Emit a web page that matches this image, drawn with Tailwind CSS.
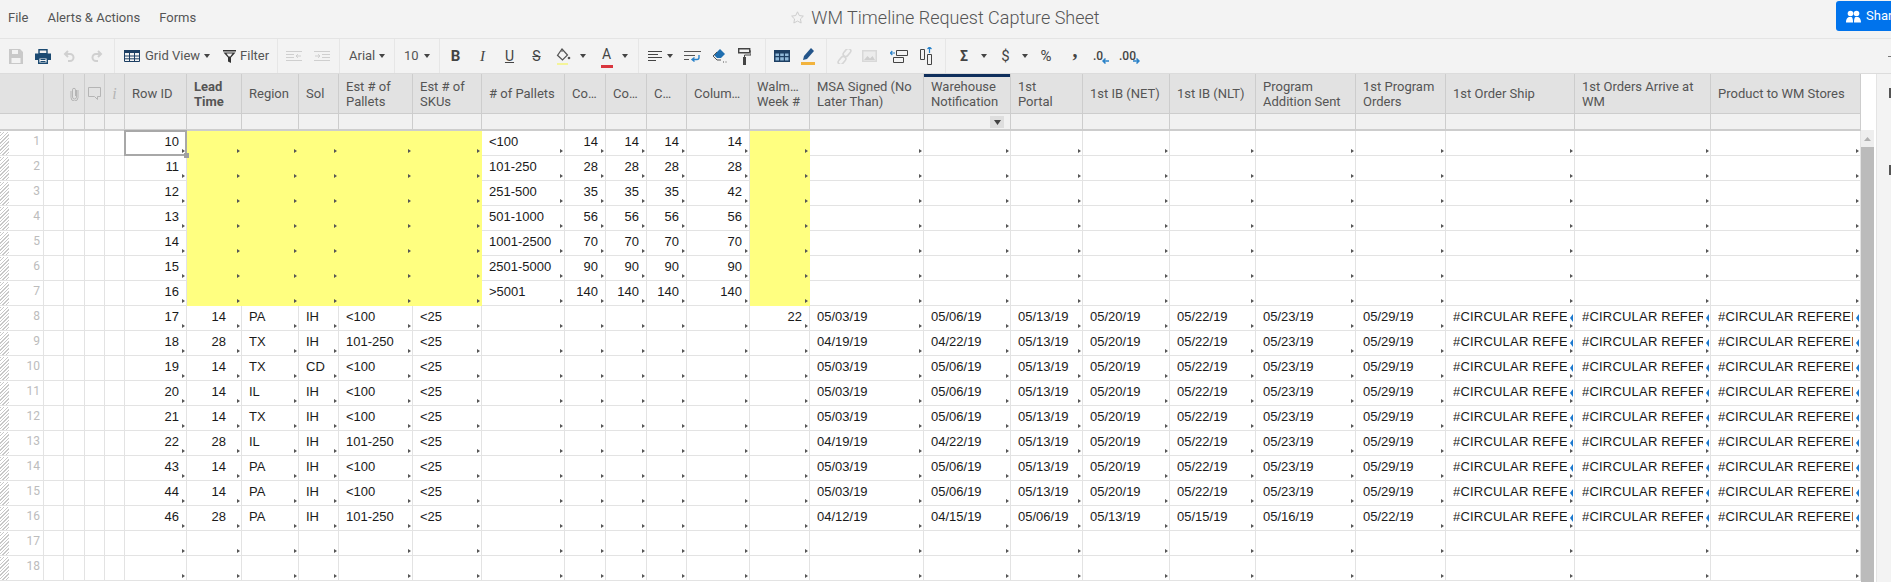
<!DOCTYPE html>
<html lang="en">
<head>
<meta charset="utf-8">
<title>WM Timeline Request Capture Sheet</title>
<script src="https://cdn.jsdelivr.net/npm/@tailwindcss/browser@4"></script>
</head>
<body class="w-[1891px] h-[582px] overflow-hidden bg-[#f3f3f3] flex flex-col font-['Roboto',sans-serif] text-[13px] text-[#555]">

<header class="h-[39px] shrink-0 grid grid-cols-[1fr_auto_1fr] border-b border-[#e4e4e4]">
  <nav class="flex items-center gap-[19px] pl-[8px] pb-[3px]"><span>File</span><span>Alerts &amp; Actions</span><span>Forms</span></nav>
  <div class="flex items-center gap-[7px] pb-[3px]">
    <svg class="w-[13px] h-[13px]" viewBox="0 0 16 16"><path d="M8 1l2.2 4.6 5 .7-3.6 3.5.9 5L8 12.4l-4.5 2.4.9-5L.8 6.300l5-.7z" fill="none" stroke="#ccc" stroke-width="1.200"/></svg>
    <h1 class="text-[18px] font-light text-[#555]">WM Timeline Request Capture Sheet</h1>
  </div>
  <div class="flex justify-end">
    <button class="mt-[1px] h-[30px] w-[80px] mr-[-25px] shrink-0 rounded-[3px] bg-[#0073ec] text-white flex items-center pl-[10px] gap-[5px] text-[13px]">
      <svg class="w-[15px] h-[13px]" viewBox="0 0 15 13" fill="#fff"><circle cx="4.500" cy="3.500" r="2.800"/><circle cx="10.500" cy="3.500" r="2.800"/><path d="M0 12.500c0-4 2-5.500 3.500-5.500h2c1 .5 1.500 2 1.500 5.500zM8 12.500c0-3.500.5-5 1.500-5.500h2C13 7 15 8.500 15 12.500z"/></svg>
      <span>Share</span>
    </button>
  </div>
</header>

<div class="h-[35px] shrink-0 flex border-b border-[#dcdcdc] text-[#555] [&>div]:flex [&>div]:items-center [&>div]:h-full [&>div]:border-r [&>div]:border-[#e6e6e6]">
  <div class="w-[115px] pl-[2px]">
    <span class="w-[27px] flex justify-center"><svg class="w-[14px] h-[15px]" viewBox="0 0 14 15"><path d="M0 0h11l3 3v12H0z" fill="#c9c9c9"/><path d="M3 1h6v4H3zM2.500 9h9v5h-9z" fill="#f3f3f3"/></svg></span>
    <span class="w-[27px] flex justify-center"><svg class="w-[16px] h-[15px]" viewBox="0 0 16 15"><path d="M4 .7h8v4H4z" fill="none" stroke="#1b4a72" stroke-width="1.400"/><path d="M0 4.500h16V11h-3V8H3v3H0z" fill="#1b4a72"/><path d="M3.700 8.700h8.600v5.600H3.700z" fill="none" stroke="#1b4a72" stroke-width="1.400"/><path d="M5.500 10.500h5M5.500 12.500h5" stroke="#1b4a72"/></svg></span>
    <span class="w-[27px] flex justify-center"><svg class="w-[13px] h-[13px]" viewBox="0 0 13 13" fill="none" stroke="#d0d0d0" stroke-width="2"><path d="M5 1L2 4l3 3"/><path d="M2 4h5a3.500 3.500 0 0 1 3.500 3.500v0A3.500 3.500 0 0 1 7 11H5"/></svg></span>
    <span class="w-[27px] flex justify-center"><svg class="w-[13px] h-[13px]" viewBox="0 0 13 13" fill="none" stroke="#d0d0d0" stroke-width="2"><path d="M8 1l3 3-3 3"/><path d="M11 4H6a3.500 3.500 0 0 0-3.500 3.500v0A3.500 3.500 0 0 0 6 11h2"/></svg></span>
  </div>
  <div class="w-[163px] pl-[9px]">
    <svg class="w-[16px] h-[12px]" viewBox="0 0 16 12"><path d="M0 0h16v3H0z" fill="#1d3f63"/><path d="M.5.500h15v11H.5zM.5 6h15M.5 8.800h15M5.500 3v9M10.500 3v9" fill="none" stroke="#1d3f63"/></svg>
    <span class="ml-[5px]">Grid View</span>
    <svg class="ml-[4px] w-[6px] h-[4px]" viewBox="0 0 6 4"><path d="M0 0h6L3 4z" fill="#444"/></svg>
    <svg class="ml-[13px] w-[13px] h-[13px]" viewBox="0 0 13 13"><path d="M0 0h13v1.500H0z" fill="#333"/><path d="M.5 2.500h12L8 7.500V13L5 11.500v-4z" fill="#333"/><path d="M3.500 3.500h6L7.300 6.500h-1.600z" fill="#f3f3f3"/></svg>
    <span class="ml-[4px]">Filter</span>
  </div>
  <div class="w-[62px] pl-[2px]">
    <span class="w-[28px] flex justify-center"><svg class="w-[16px] h-[11px]" viewBox="0 0 16 11" stroke="#cfcfcf" fill="none"><path d="M0 .500h16M0 3.500h8M0 6.500h8M0 9.500h16"/><path d="M15 5h-5M12 3.200L10 5l2 1.800"/></svg></span>
    <span class="w-[28px] flex justify-center"><svg class="w-[16px] h-[11px]" viewBox="0 0 16 11" stroke="#cfcfcf" fill="none"><path d="M0 .500h16M8 3.500h8M8 6.500h8M0 9.500h16"/><path d="M1 5h5M4 3.200L6 5 4 6.800"/></svg></span>
  </div>
  <div class="w-[55px] pl-[9px]">
    <span>Arial</span>
    <svg class="ml-[4px] w-[6px] h-[4px]" viewBox="0 0 6 4"><path d="M0 0h6L3 4z" fill="#444"/></svg>
  </div>
  <div class="w-[45px] pl-[9px]">
    <span>10</span>
    <svg class="ml-[5px] w-[6px] h-[4px]" viewBox="0 0 6 4"><path d="M0 0h6L3 4z" fill="#444"/></svg>
  </div>
  <div class="w-[199px] pl-[2px] text-[#444] [&>span]:w-[27px] [&>span]:flex [&>span]:justify-center">
    <span class="text-[15px] font-bold">B</span>
    <span class="text-[15px] italic font-['Liberation_Serif',serif]">I</span>
    <span class="text-[14px] underline">U</span>
    <span class="text-[14px] line-through">S</span>
    <span><svg class="w-[15px] h-[17px]" viewBox="0 0 15 17"><path d="M6 1l5.500 6L6.500 12 1.500 7.300z" fill="none" stroke="#555" stroke-width="1.200"/><path d="M6 1v3" stroke="#555"/><circle cx="13" cy="10" r="1.300" fill="#555"/><path d="M1 15h11v2H1z" fill="#f4f49a"/></svg></span>
    <svg class="ml-[3px] w-[6px] h-[4px]" viewBox="0 0 6 4"><path d="M0 0h6L3 4z" fill="#444"/></svg>
    <span class="ml-[7px] relative text-[14px] pb-[3px]">A<i class="absolute left-[8px] bottom-0 w-[12px] h-[3px] bg-[#d9363e]"></i></span>
    <svg class="ml-[2px] w-[6px] h-[4px]" viewBox="0 0 6 4"><path d="M0 0h6L3 4z" fill="#444"/></svg>
  </div>
  <div class="w-[127px] pl-[9px]">
    <svg class="w-[14px] h-[12px]" viewBox="0 0 14 12" stroke="#444"><path d="M0 1.500h14M0 4.500h10M0 7.500h14M0 10.500h8"/></svg>
    <svg class="ml-[5px] w-[6px] h-[4px]" viewBox="0 0 6 4"><path d="M0 0h6L3 4z" fill="#444"/></svg>
    <svg class="ml-[11px] w-[17px] h-[12px]" viewBox="0 0 17 12" fill="none"><path d="M0 1.500h17M0 5.500h11M0 9.500h5" stroke="#555"/><path d="M15 5v2.500a2 2 0 0 1-2 2H8M10.500 7.500L8 9.500l2.500 2" stroke="#2a82c9" stroke-width="1.400"/></svg>
    <svg class="ml-[11px] w-[15px] h-[14px]" viewBox="0 0 15 14"><path d="M8 0l5 5-4 4H5L2 6z" fill="#1f6fb0"/><path d="M5 3L1 7l4 4h4" fill="none" stroke="#555"/><path d="M11 13h1M13.500 13h1" stroke="#555"/></svg>
    <svg class="ml-[11px] w-[13px] h-[17px]" viewBox="0 0 13 17"><path d="M.7.700h11v4H.7z" fill="none" stroke="#444" stroke-width="1.400"/><path d="M12 3h1v4H6.500v2" fill="none" stroke="#444"/><path d="M5 9h3v8H5z" fill="#444"/></svg>
  </div>
  <div class="w-[61px] pl-[8px]">
    <svg class="w-[16px] h-[12px]" viewBox="0 0 16 12"><path d="M0 0h16v12H0z" fill="#1d3f63"/><path d="M1.500 3.500h3.500V6H1.500zM6.200 3.500h3.600V6H6.200zM11 3.500h3.500V6H11zM1.500 7.300h3.500v3.200H1.500zM6.200 7.300h3.600v3.200H6.200zM11 7.300h3.500v3.200H11z" fill="#8fb8d8"/></svg>
    <svg class="ml-[10px] w-[16px] h-[17px]" viewBox="0 0 16 17"><path d="M11 0l3 3-7 8-4 1 1-4z" fill="#24558a"/><path d="M1 14h14v3H1z" fill="#f2b33d"/></svg>
  </div>
  <div class="w-[119px] pl-[10px]">
    <svg class="w-[15px] h-[15px]" viewBox="0 0 15 15" fill="none" stroke="#d6d6d6" stroke-width="1.600"><rect x="7.500" y="-1" width="5" height="9" rx="2.500" transform="rotate(40 10 3.500)"/><rect x="2.500" y="7" width="5" height="9" rx="2.500" transform="rotate(40 5 11.500)"/></svg>
    <svg class="ml-[10px] w-[15px] h-[12px]" viewBox="0 0 15 12"><path d="M0 0h15v12H0z" fill="#d8d8d8"/><path d="M1.500 1.500h12v9h-12z" fill="#ececec"/><path d="M2 10l3.500-4 2.500 2.500L10.500 6 13 10z" fill="#cfcfcf"/></svg>
    <svg class="ml-[13px] w-[18px] h-[13px]" viewBox="0 0 18 13" fill="none"><path d="M6.500 .500h11v5h-11zM3.500 7.500h10v5h-10z" stroke="#444"/><path d="M5 3H0M2.300 1L.3 3l2 2" stroke="#2a82c9" stroke-width="1.200"/></svg>
    <svg class="ml-[12px] w-[12px] h-[18px]" viewBox="0 0 12 18" fill="none"><path d="M.5 2.500h4v10h-4zM7.500 7.500h4v10h-4z" stroke="#444"/><path d="M9.500 6V0M7.500 2l2-2 2 2" stroke="#2a82c9" stroke-width="1.200"/></svg>
  </div>
  <div class="flex-1 border-r-0! pl-[13px] text-[#444] text-[14px]">
    <span class="w-[10px] flex justify-center font-bold">Σ</span>
    <svg class="ml-[12px] w-[6px] h-[4px]" viewBox="0 0 6 4"><path d="M0 0h6L3 4z" fill="#444"/></svg>
    <span class="ml-[14px] w-[9px] flex justify-center text-[15px]">$</span>
    <svg class="ml-[12px] w-[6px] h-[4px]" viewBox="0 0 6 4"><path d="M0 0h6L3 4z" fill="#444"/></svg>
    <span class="ml-[12px] w-[12px] flex justify-center text-[15px]">%</span>
    <span class="ml-[21px] w-[4px] flex justify-center text-[20px] font-bold font-['Liberation_Serif',serif] -translate-y-[6px]">,</span>
    <span class="ml-[16px] relative text-[12px] leading-[13px] font-medium w-[22px]">.0<svg class="absolute left-[9px] top-[8px] w-[7px] h-[6px]" viewBox="0 0 7 6" fill="none" stroke="#2a82c9" stroke-width="1.500"><path d="M7 3H1M3.500 .5L1 3l2.500 2.500"/></svg></span>
    <span class="ml-[4px] relative text-[12px] leading-[13px] font-medium w-[28px]">.00<svg class="absolute left-[14px] top-[8px] w-[7px] h-[6px]" viewBox="0 0 7 6" fill="none" stroke="#2a82c9" stroke-width="1.500"><path d="M0 3h6M3.500 .5L6 3 3.500 5.500"/></svg></span>
    <span class="ml-auto w-[3px] h-[1px] bg-[#777]"></span>
  </div>
</div>

<main class="flex-1 min-h-0 flex overflow-hidden">
  <div class="w-[1861px] shrink-0 bg-white overflow-hidden">
    <table class="table-fixed w-[1861px] border-separate border-spacing-0">
      <colgroup>
        <col class="w-[44px]"><col class="w-[20px]"><col class="w-[21px]"><col class="w-[20px]"><col class="w-[20px]">
        <col class="w-[62px]"><col class="w-[55px]"><col class="w-[57px]"><col class="w-[40px]"><col class="w-[74px]"><col class="w-[69px]"><col class="w-[83px]">
        <col class="w-[41px]"><col class="w-[41px]"><col class="w-[40px]"><col class="w-[63px]"><col class="w-[60px]">
        <col class="w-[114px]"><col class="w-[87px]"><col class="w-[72px]"><col class="w-[87px]"><col class="w-[86px]"><col class="w-[100px]"><col class="w-[90px]">
        <col class="w-[129px]"><col class="w-[136px]"><col class="w-[150px]">
      </colgroup>
      <thead class="text-[#555] [&_th]:relative [&_th]:border-r [&_th]:border-[#cdcdcd] [&_th]:px-[7px] [&_th]:font-normal [&_th]:text-left [&_th]:leading-[15px] [&_th]:overflow-hidden [&_th]:whitespace-nowrap">
        <tr class="h-[40px] bg-[#e2e2e2] [&_th]:border-b">
          <th></th><th></th>
          <th class="px-0!"><svg class="mx-auto w-[9px] h-[14px]" viewBox="0 0 9 14" fill="none" stroke="#b5b5b5"><path d="M6.500 3v7a2 2 0 0 1-4 0V2.800a1.500 1.500 0 0 1 3 0V9"/><path d="M1 4v6.500a3.500 3.500 0 0 0 7 0V3"/></svg></th>
          <th class="px-0!"><svg class="mx-auto w-[13px] h-[13px]" viewBox="0 0 13 13" fill="none" stroke="#b5b5b5"><path d="M.5.500h12v9H9.500v3l-3-3h-6z"/></svg></th>
          <th class="px-0! text-center! italic font-['Liberation_Serif',serif] text-[16px] text-[#b5b5b5]">i</th>
          <th>Row ID</th>
          <th class="font-bold!">Lead<br>Time</th>
          <th>Region</th>
          <th>Sol</th>
          <th>Est # of<br>Pallets</th>
          <th>Est # of<br>SKUs</th>
          <th># of Pallets</th>
          <th>Co…</th>
          <th>Co…</th>
          <th>C…</th>
          <th>Colum…</th>
          <th>Walm…<br>Week #</th>
          <th>MSA Signed (No<br>Later Than)</th>
          <th>Warehouse<br>Notification<span class="absolute top-0 left-0 right-0 h-[3px] bg-[#0f2f5c]"></span></th>
          <th>1st<br>Portal</th>
          <th>1st IB (NET)</th>
          <th>1st IB (NLT)</th>
          <th>Program<br>Addition Sent</th>
          <th>1st Program<br>Orders</th>
          <th>1st Order Ship</th>
          <th>1st Orders Arrive at<br>WM</th>
          <th>Product to WM Stores</th>
        </tr>
        <tr class="h-[17px] bg-[#f1f1f1] [&_th]:border-b-2">
          <th></th><th></th><th></th><th></th><th></th><th></th><th></th><th></th><th></th><th></th><th></th><th></th><th></th><th></th><th></th><th></th><th></th><th></th>
          <th><span class="absolute right-[6px] top-[2px] w-[14px] h-[12px] bg-[#dedede] flex items-center justify-center"><svg class="w-[7px] h-[5px]" viewBox="0 0 7 5"><path d="M0 0h7L3.500 5z" fill="#444"/></svg></span></th>
          <th></th><th></th><th></th><th></th><th></th><th></th><th></th><th></th>
        </tr>
      </thead>
      <tbody class="font-['Liberation_Sans',Arial,sans-serif] text-[13px] text-[#1a1a1a] leading-[19px] [&_td]:relative [&_td]:h-[25px] [&_td]:border-r [&_td]:border-b [&_td]:border-[#e3e3e3] [&_td]:px-[7px] [&_td]:pt-[1px] [&_td]:align-top [&_td:nth-child(6)]:text-right [&_td:nth-child(7)]:text-right [&_td:nth-child(7)]:pr-[15px] [&_td:nth-child(n+13):nth-child(-n+17)]:text-right [&_td:first-child]:font-['Roboto',sans-serif] [&_td:first-child]:text-[12px] [&_td:first-child]:text-[#bcbcbc] [&_td:first-child]:text-right [&_td:first-child]:pr-[3px] [&_td:first-child]:bg-no-repeat [&_td:first-child]:bg-[position:0_1px] [&_td:first-child]:bg-[size:9px_23px] [&_td:first-child]:bg-[image:repeating-linear-gradient(135deg,#c8c8c8_0,#c8c8c8_1px,#fff_1px,#fff_2.5px)] [&_td:nth-child(n+6)]:after:absolute [&_td:nth-child(n+6)]:after:content-[''] [&_td:nth-child(n+6)]:after:right-[1px] [&_td:nth-child(n+6)]:after:bottom-[2px] [&_td:nth-child(n+6)]:after:border-y-[2.5px] [&_td:nth-child(n+6)]:after:border-y-transparent [&_td:nth-child(n+6)]:after:border-l-[3px] [&_td:nth-child(n+6)]:after:border-l-[#555] [&_tr:nth-child(-n+7)>td:nth-child(n+7):nth-child(-n+11)]:bg-[#ffff80] [&_tr:nth-child(-n+7)>td:nth-child(n+7):nth-child(-n+11)]:border-[#ffff80] [&_tr:nth-child(-n+7)>td:nth-child(17)]:bg-[#ffff80] [&_tr:nth-child(-n+7)>td:nth-child(17)]:border-[#ffff80] [&_td>div]:overflow-hidden [&_td>div]:whitespace-nowrap [&_td>div]:tracking-[0.2px] [&_td>span]:absolute [&_td>span]:right-[1px] [&_td>span]:top-[8px] [&_td>span]:border-y-4 [&_td>span]:border-y-transparent [&_td>span]:border-r-[3px] [&_td>span]:border-r-[#1a78cf]">
        <tr><td>1</td><td></td><td></td><td></td><td></td><td>10<i class="absolute -left-[1px] -top-[1px] -right-[1px] -bottom-[1px] z-10 border-2 border-[#a8a8a8]"></i><i class="absolute -right-[3px] -bottom-[3px] z-10 size-[5px] bg-[#a0a0a0]"></i></td><td></td><td></td><td></td><td></td><td></td><td>&lt;100</td><td>14</td><td>14</td><td>14</td><td>14</td><td></td><td></td><td></td><td></td><td></td><td></td><td></td><td></td><td></td><td></td><td></td></tr>
        <tr><td>2</td><td></td><td></td><td></td><td></td><td>11</td><td></td><td></td><td></td><td></td><td></td><td>101-250</td><td>28</td><td>28</td><td>28</td><td>28</td><td></td><td></td><td></td><td></td><td></td><td></td><td></td><td></td><td></td><td></td><td></td></tr>
        <tr><td>3</td><td></td><td></td><td></td><td></td><td>12</td><td></td><td></td><td></td><td></td><td></td><td>251-500</td><td>35</td><td>35</td><td>35</td><td>42</td><td></td><td></td><td></td><td></td><td></td><td></td><td></td><td></td><td></td><td></td><td></td></tr>
        <tr><td>4</td><td></td><td></td><td></td><td></td><td>13</td><td></td><td></td><td></td><td></td><td></td><td>501-1000</td><td>56</td><td>56</td><td>56</td><td>56</td><td></td><td></td><td></td><td></td><td></td><td></td><td></td><td></td><td></td><td></td><td></td></tr>
        <tr><td>5</td><td></td><td></td><td></td><td></td><td>14</td><td></td><td></td><td></td><td></td><td></td><td>1001-2500</td><td>70</td><td>70</td><td>70</td><td>70</td><td></td><td></td><td></td><td></td><td></td><td></td><td></td><td></td><td></td><td></td><td></td></tr>
        <tr><td>6</td><td></td><td></td><td></td><td></td><td>15</td><td></td><td></td><td></td><td></td><td></td><td>2501-5000</td><td>90</td><td>90</td><td>90</td><td>90</td><td></td><td></td><td></td><td></td><td></td><td></td><td></td><td></td><td></td><td></td><td></td></tr>
        <tr><td>7</td><td></td><td></td><td></td><td></td><td>16</td><td></td><td></td><td></td><td></td><td></td><td>&gt;5001</td><td>140</td><td>140</td><td>140</td><td>140</td><td></td><td></td><td></td><td></td><td></td><td></td><td></td><td></td><td></td><td></td><td></td></tr>
        <tr><td>8</td><td></td><td></td><td></td><td></td><td>17</td><td>14</td><td>PA</td><td>IH</td><td>&lt;100</td><td>&lt;25</td><td></td><td></td><td></td><td></td><td></td><td>22</td><td>05/03/19</td><td>05/06/19</td><td>05/13/19</td><td>05/20/19</td><td>05/22/19</td><td>05/23/19</td><td>05/29/19</td><td><div>#CIRCULAR REFERENCE</div><span></span></td><td><div>#CIRCULAR REFERENCE</div><span></span></td><td><div>#CIRCULAR REFERENCE</div><span></span></td></tr>
        <tr><td>9</td><td></td><td></td><td></td><td></td><td>18</td><td>28</td><td>TX</td><td>IH</td><td>101-250</td><td>&lt;25</td><td></td><td></td><td></td><td></td><td></td><td></td><td>04/19/19</td><td>04/22/19</td><td>05/13/19</td><td>05/20/19</td><td>05/22/19</td><td>05/23/19</td><td>05/29/19</td><td><div>#CIRCULAR REFERENCE</div><span></span></td><td><div>#CIRCULAR REFERENCE</div><span></span></td><td><div>#CIRCULAR REFERENCE</div><span></span></td></tr>
        <tr><td>10</td><td></td><td></td><td></td><td></td><td>19</td><td>14</td><td>TX</td><td>CD</td><td>&lt;100</td><td>&lt;25</td><td></td><td></td><td></td><td></td><td></td><td></td><td>05/03/19</td><td>05/06/19</td><td>05/13/19</td><td>05/20/19</td><td>05/22/19</td><td>05/23/19</td><td>05/29/19</td><td><div>#CIRCULAR REFERENCE</div><span></span></td><td><div>#CIRCULAR REFERENCE</div><span></span></td><td><div>#CIRCULAR REFERENCE</div><span></span></td></tr>
        <tr><td>11</td><td></td><td></td><td></td><td></td><td>20</td><td>14</td><td>IL</td><td>IH</td><td>&lt;100</td><td>&lt;25</td><td></td><td></td><td></td><td></td><td></td><td></td><td>05/03/19</td><td>05/06/19</td><td>05/13/19</td><td>05/20/19</td><td>05/22/19</td><td>05/23/19</td><td>05/29/19</td><td><div>#CIRCULAR REFERENCE</div><span></span></td><td><div>#CIRCULAR REFERENCE</div><span></span></td><td><div>#CIRCULAR REFERENCE</div><span></span></td></tr>
        <tr><td>12</td><td></td><td></td><td></td><td></td><td>21</td><td>14</td><td>TX</td><td>IH</td><td>&lt;100</td><td>&lt;25</td><td></td><td></td><td></td><td></td><td></td><td></td><td>05/03/19</td><td>05/06/19</td><td>05/13/19</td><td>05/20/19</td><td>05/22/19</td><td>05/23/19</td><td>05/29/19</td><td><div>#CIRCULAR REFERENCE</div><span></span></td><td><div>#CIRCULAR REFERENCE</div><span></span></td><td><div>#CIRCULAR REFERENCE</div><span></span></td></tr>
        <tr><td>13</td><td></td><td></td><td></td><td></td><td>22</td><td>28</td><td>IL</td><td>IH</td><td>101-250</td><td>&lt;25</td><td></td><td></td><td></td><td></td><td></td><td></td><td>04/19/19</td><td>04/22/19</td><td>05/13/19</td><td>05/20/19</td><td>05/22/19</td><td>05/23/19</td><td>05/29/19</td><td><div>#CIRCULAR REFERENCE</div><span></span></td><td><div>#CIRCULAR REFERENCE</div><span></span></td><td><div>#CIRCULAR REFERENCE</div><span></span></td></tr>
        <tr><td>14</td><td></td><td></td><td></td><td></td><td>43</td><td>14</td><td>PA</td><td>IH</td><td>&lt;100</td><td>&lt;25</td><td></td><td></td><td></td><td></td><td></td><td></td><td>05/03/19</td><td>05/06/19</td><td>05/13/19</td><td>05/20/19</td><td>05/22/19</td><td>05/23/19</td><td>05/29/19</td><td><div>#CIRCULAR REFERENCE</div><span></span></td><td><div>#CIRCULAR REFERENCE</div><span></span></td><td><div>#CIRCULAR REFERENCE</div><span></span></td></tr>
        <tr><td>15</td><td></td><td></td><td></td><td></td><td>44</td><td>14</td><td>PA</td><td>IH</td><td>&lt;100</td><td>&lt;25</td><td></td><td></td><td></td><td></td><td></td><td></td><td>05/03/19</td><td>05/06/19</td><td>05/13/19</td><td>05/20/19</td><td>05/22/19</td><td>05/23/19</td><td>05/29/19</td><td><div>#CIRCULAR REFERENCE</div><span></span></td><td><div>#CIRCULAR REFERENCE</div><span></span></td><td><div>#CIRCULAR REFERENCE</div><span></span></td></tr>
        <tr><td>16</td><td></td><td></td><td></td><td></td><td>46</td><td>28</td><td>PA</td><td>IH</td><td>101-250</td><td>&lt;25</td><td></td><td></td><td></td><td></td><td></td><td></td><td>04/12/19</td><td>04/15/19</td><td>05/06/19</td><td>05/13/19</td><td>05/15/19</td><td>05/16/19</td><td>05/22/19</td><td><div>#CIRCULAR REFERENCE</div><span></span></td><td><div>#CIRCULAR REFERENCE</div><span></span></td><td><div>#CIRCULAR REFERENCE</div><span></span></td></tr>
        <tr><td>17</td><td></td><td></td><td></td><td></td><td></td><td></td><td></td><td></td><td></td><td></td><td></td><td></td><td></td><td></td><td></td><td></td><td></td><td></td><td></td><td></td><td></td><td></td><td></td><td></td><td></td><td></td></tr>
        <tr><td>18</td><td></td><td></td><td></td><td></td><td></td><td></td><td></td><td></td><td></td><td></td><td></td><td></td><td></td><td></td><td></td><td></td><td></td><td></td><td></td><td></td><td></td><td></td><td></td><td></td><td></td><td></td></tr>
      </tbody>
    </table>
  </div>
  <div class="w-[15px] shrink-0 bg-white pt-[56px] flex flex-col">
    <div class="w-[13px] h-[17px] bg-[#eeeeee] flex items-center justify-center"><svg class="w-[7px] h-[4px]" viewBox="0 0 7 4"><path d="M0 4h7L3.500 0z" fill="#b0b0b0"/></svg></div>
    <div class="w-[13px] flex-1 bg-[#bbbbbb]"></div>
  </div>
  <aside class="flex-1 border-l border-[#e4e4e4] pl-[12px] pt-[14px] flex flex-col gap-[67px]">
    <div class="w-[2px] h-[10px] bg-[#555]"></div>
    <div class="w-[2px] h-[10px] bg-[#555]"></div>
  </aside>
</main>
</body>
</html>
